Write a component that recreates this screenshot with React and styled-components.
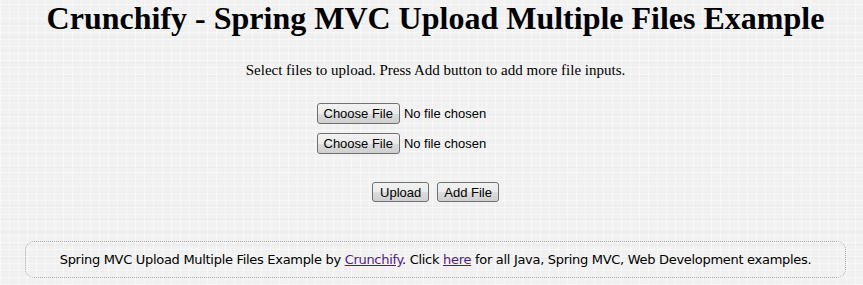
import React from "react";
import styled, { createGlobalStyle } from "styled-components";

const Global = createGlobalStyle`
  html, body {
    margin: 0;
    padding: 0;
  }
  body {
    background-color: #f1f1f1;
    background-image:
      repeating-linear-gradient(0deg, rgba(255,255,255,0.45) 0 1px, transparent 1px 7px),
      repeating-linear-gradient(90deg, rgba(255,255,255,0.45) 0 1px, transparent 1px 9px),
      repeating-linear-gradient(0deg, rgba(0,0,0,0.015) 0 2px, transparent 2px 13px);
    font-family: "Liberation Serif", "Times New Roman", serif;
    color: #000;
    min-height: 285px;
  }
`;

const Page = styled.div`
  padding-left: 8px;
  display: flex;
  flex-direction: column;
  align-items: center;
`;

const Title = styled.h1`
  margin: 0;
  font-family: "Liberation Serif", "Times New Roman", serif;
  font-size: 32px;
  font-weight: bold;
  line-height: 37px;
  text-align: center;
`;

const Lead = styled.p`
  margin: 24px 0 0;
  font-size: 15px;
  line-height: 18px;
  text-align: center;
`;

const FileList = styled.div`
  margin-top: 24px;
  display: flex;
  flex-direction: column;
  gap: 9px;
`;

const FileInput = styled.label`
  width: 238px;
  display: flex;
  align-items: center;
  gap: 4px;
  font-family: "Liberation Sans", Arial, sans-serif;
  font-size: 13px;
  color: #000;
  white-space: nowrap;
  overflow: hidden;
`;

const Button = styled.button`
  box-sizing: border-box;
  height: ${(p) => p.$h || 20}px;
  padding: 0 ${(p) => p.$px || 6}px;
  border: 1px solid #707070;
  border-radius: 3px;
  background: linear-gradient(
    to bottom,
    #f2f2f2 0%,
    #ebebeb 50%,
    #dddddd 51%,
    #cfcfcf 100%
  );
  font-family: "Liberation Sans", Arial, sans-serif;
  font-size: 13px;
  line-height: 1;
  color: #000;
  cursor: default;
  margin: 0;
`;

const Actions = styled.div`
  margin-top: 28px;
  display: flex;
  gap: 8px;
`;

const Footer = styled.div`
  align-self: stretch;
  margin: 39px 17px 0;
  padding: 10px 0;
  border: 1px dotted #a8a8a8;
  border-radius: 9px;
  text-align: center;
  font-family: "DejaVu Sans", Verdana, sans-serif;
  font-size: 13px;
  letter-spacing: -0.3px;
  line-height: 15px;
  color: #000;
`;

const Link = styled.a`
  color: #551a8b;
  text-decoration: underline;
`;

export default function App() {
  return (
    <>
      <Global />
      <Page>
        <Title>Crunchify - Spring MVC Upload Multiple Files Example</Title>
        <Lead>Select files to upload. Press Add button to add more file inputs.</Lead>
        <FileList>
          {[0, 1].map((i) => (
            <FileInput key={i}>
              <Button type="button" $h={21} $px={6}>Choose File</Button>
              <span>No file chosen</span>
            </FileInput>
          ))}
        </FileList>
        <Actions>
          <Button type="button" $px={7}>Upload</Button>
          <Button type="button" $px={6}>Add File</Button>
        </Actions>
        <Footer>
          Spring MVC Upload Multiple Files Example by <Link href="#">Crunchify</Link>. Click{" "}
          <Link href="#">here</Link> for all Java, Spring MVC, Web Development examples.
        </Footer>
      </Page>
    </>
  );
}
